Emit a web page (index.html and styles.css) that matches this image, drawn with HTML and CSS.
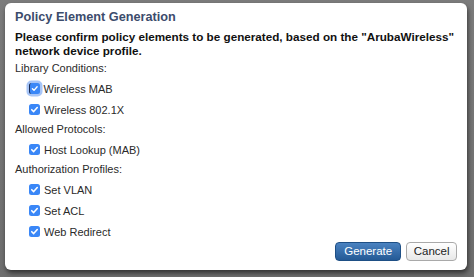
FILE: index.html
```html
<!DOCTYPE html>
<html>
<head>
<meta charset="utf-8">
<link rel="stylesheet" href="styles.css">
</head>
<body>
<div class="dialog">
  <div class="title">Policy Element Generation</div>
  <div class="desc">Please confirm policy elements to be generated, based on the "ArubaWireless" network device profile.</div>
  <div class="list">
    <div class="label">Library Conditions:</div>
    <label class="item"><span class="cb focus"><svg viewBox="0 0 12 12"><path d="M3 6.2 L5.1 8.3 L9 3.8"/></svg></span>Wireless MAB</label>
    <label class="item"><span class="cb"><svg viewBox="0 0 12 12"><path d="M3 6.2 L5.1 8.3 L9 3.8"/></svg></span>Wireless 802.1X</label>
    <div class="label">Allowed Protocols:</div>
    <label class="item"><span class="cb"><svg viewBox="0 0 12 12"><path d="M3 6.2 L5.1 8.3 L9 3.8"/></svg></span>Host Lookup (MAB)</label>
    <div class="label">Authorization Profiles:</div>
    <label class="item"><span class="cb"><svg viewBox="0 0 12 12"><path d="M3 6.2 L5.1 8.3 L9 3.8"/></svg></span>Set VLAN</label>
    <label class="item"><span class="cb"><svg viewBox="0 0 12 12"><path d="M3 6.2 L5.1 8.3 L9 3.8"/></svg></span>Set ACL</label>
    <label class="item"><span class="cb"><svg viewBox="0 0 12 12"><path d="M3 6.2 L5.1 8.3 L9 3.8"/></svg></span>Web Redirect</label>
  </div>
  <div class="actions">
    <button class="btn primary">Generate</button>
    <button class="btn cancel">Cancel</button>
  </div>
</div>
</body>
</html>
```
FILE: styles.css
```css
html, body {
  margin: 0;
  padding: 0;
}
body {
  width: 474px;
  height: 277px;
  background: linear-gradient(#7c7c7c, #6e6e6e);
  font-family: "Liberation Sans", Arial, sans-serif;
  overflow: hidden;
}
.dialog {
  box-sizing: border-box;
  margin: 3px 0 0 5px;
  width: 462px;
  height: 267px;
  background: #fff;
  border-radius: 6px;
  box-shadow: 1px 3px 5px rgba(0,0,0,0.55);
  padding: 5px 10px 0 10px;
  display: flex;
  flex-direction: column;
}
.title {
  font-size: 12.7px;
  font-weight: bold;
  color: #3c4c6c;
  line-height: 18px;
}
.desc {
  margin-top: 4px;
  font-size: 11.7px;
  font-weight: bold;
  color: #111;
  line-height: 14px;
}
.list {
  margin-top: 1px;
  display: flex;
  flex-direction: column;
}
.label {
  height: 19px;
  line-height: 19px;
  font-size: 11px;
  color: #2a2a2a;
}
.item {
  height: 21px;
  display: flex;
  align-items: center;
  padding-left: 14px;
  font-size: 11px;
  color: #2a2a2a;
}
.cb {
  width: 11px;
  height: 11px;
  border-radius: 2.5px;
  background: #3a87f7;
  margin-right: 4px;
  display: flex;
  align-items: center;
  justify-content: center;
}
.cb svg {
  width: 11px;
  height: 11px;
}
.cb path {
  fill: none;
  stroke: #fff;
  stroke-width: 1.7;
  stroke-linecap: round;
  stroke-linejoin: round;
}
.cb.focus {
  box-shadow: 0 0 0 2.5px rgba(80,140,240,0.5);
  border-left: 1.5px solid #1a2a50;
  width: 9.5px;
}
.actions {
  margin-top: auto;
  margin-bottom: 9px;
  display: flex;
  justify-content: flex-end;
  gap: 5px;
}
.btn {
  font-family: "Liberation Sans", Arial, sans-serif;
  font-size: 11.5px;
  height: 19px;
  padding: 0 8px;
  border-radius: 4px;
  border: 1px solid #a9a9a9;
  background: linear-gradient(#ffffff, #e8e8e8);
  color: #222;
  line-height: 17px;
}
.btn.primary {
  border-color: #1e4f85;
  background: linear-gradient(#4a82c0, #245a96);
  color: #fff;
  padding: 0 8px;
}
.btn.cancel {
  padding: 0 6.5px;
}
```
